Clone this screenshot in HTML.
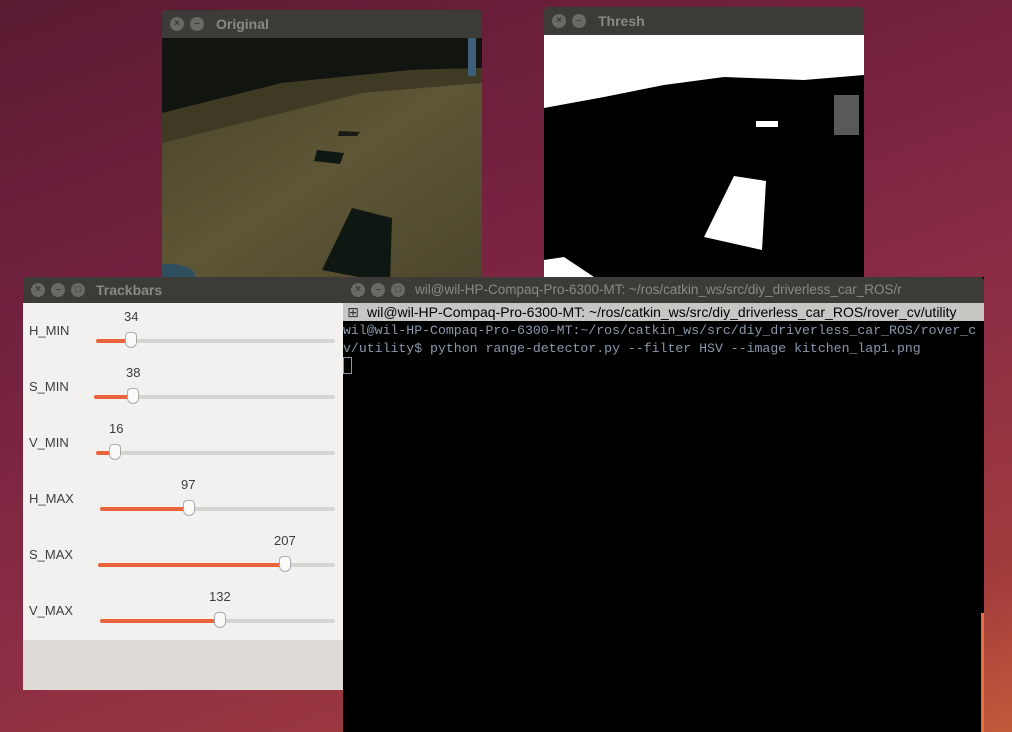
<!DOCTYPE html>
<html><head><meta charset="utf-8"><style>
*{margin:0;padding:0;box-sizing:border-box}
body{width:1012px;height:732px;overflow:hidden;position:relative;font-family:"Liberation Sans","DejaVu Sans",sans-serif;
background:linear-gradient(160deg,#5a1b33 0%,#762240 35%,#8c2d45 60%,#a03b3c 85%,#c25a3a 100%);}
.win{position:absolute}
.tb{position:absolute;left:0;right:0;top:0;background:#3c3b37;border-radius:4px 4px 0 0;color:#8a8984;font-weight:bold;font-size:14px}
.btn{position:absolute;top:50%;margin-top:-7px;width:14px;height:14px;border-radius:50%;background:#6a6964;color:#3c3b37;font-size:10px;line-height:14px;text-align:center}
.lbl{position:absolute;left:6px;font-size:13px;color:#3c3c3c}
.val{position:absolute;font-size:13px;color:#3c3c3c}
.track{position:absolute;height:4px;background:#d6d4d0;border-radius:2px;right:8px}
.fill{position:absolute;left:0;top:0;height:4px;background:#e8643a;border-radius:2px}
.h{position:absolute;top:-7px;width:12px;height:16px;background:#fafafa;border:1px solid #aaa;border-radius:4px 4px 6px 6px}
.term{font-family:"Liberation Mono","DejaVu Sans Mono",monospace;font-size:13.2px;color:#8a98ab;line-height:18px;white-space:pre}
</style></head><body>

<!-- Original -->
<div class="win" style="left:162px;top:10px;width:320px;height:268px">
 <div class="tb" style="height:28px"><span class="btn" style="left:8px">×</span><span class="btn" style="left:28px">–</span><span style="position:absolute;left:54px;top:6px">Original</span></div>
 <svg style="position:absolute;left:0;top:28px" width="320" height="240">
  <defs><linearGradient id="fl" x1="0" y1="0" x2="1" y2="1"><stop offset="0" stop-color="#4a4328"/><stop offset="0.5" stop-color="#5e5636"/><stop offset="1" stop-color="#4c462c"/></linearGradient></defs>
  <rect width="320" height="240" fill="#11140f"/>
  <polygon points="0,75 120,45 250,32 320,30 320,240 0,240" fill="url(#fl)"/>
  <polygon points="0,75 120,45 250,32 320,30 320,45 200,55 0,105" fill="#3e3a24"/>
  <polygon points="190,170 230,180 228,245 160,232" fill="#0f1712"/>
  <polygon points="155,112 182,115 178,126 152,123" fill="#0f1712"/>
  <polygon points="177,93 198,94 195,98 176,98" fill="#181a14"/>
  <rect x="306" y="0" width="8" height="38" fill="#3d5f7c"/>
  <ellipse cx="8" cy="238" rx="25" ry="12" fill="#2f4e5e"/>
 </svg>
</div>

<!-- Thresh -->
<div class="win" style="left:544px;top:7px;width:320px;height:270px">
 <div class="tb" style="height:28px"><span class="btn" style="left:8px">×</span><span class="btn" style="left:28px">–</span><span style="position:absolute;left:54px;top:6px">Thresh</span></div>
 <svg style="position:absolute;left:0;top:28px" width="320" height="242">
  <rect width="320" height="242" fill="#000"/>
  <polygon points="0,0 320,0 320,40 260,45 180,42 120,50 60,62 0,73" fill="#fff"/>
  <rect x="290" y="60" width="25" height="40" fill="#fff" opacity="0.35"/>
  <polygon points="190,141 222,146 218,215 160,202" fill="#fff"/>
  <polygon points="0,225 20,222 50,242 0,242" fill="#fff"/>
  <rect x="212" y="86" width="22" height="6" fill="#fff"/>
 </svg>
</div>

<!-- Trackbars -->
<div class="win" style="left:23px;top:277px;width:320px;height:413px">
 <div class="tb" style="height:26px"><span class="btn" style="left:8px">×</span><span class="btn" style="left:28px">–</span><span class="btn" style="left:48px">□</span><span style="position:absolute;left:73px;top:5px">Trackbars</span></div>
 <div style="position:absolute;left:0;top:26px;width:320px;height:337px;background:#f2f1f0">
  <div class="val" style="left:101px;top:6px">34</div><div class="lbl" style="top:20px">H_MIN</div>
  <div class="track" style="left:73px;top:36px"><div class="fill" style="width:35px"></div><div class="h" style="left:29px"></div></div>
  <div class="val" style="left:103px;top:62px">38</div><div class="lbl" style="top:76px">S_MIN</div>
  <div class="track" style="left:71px;top:92px"><div class="fill" style="width:39px"></div><div class="h" style="left:33px"></div></div>
  <div class="val" style="left:86px;top:118px">16</div><div class="lbl" style="top:132px">V_MIN</div>
  <div class="track" style="left:73px;top:148px"><div class="fill" style="width:19px"></div><div class="h" style="left:13px"></div></div>
  <div class="val" style="left:158px;top:174px">97</div><div class="lbl" style="top:188px">H_MAX</div>
  <div class="track" style="left:77px;top:204px"><div class="fill" style="width:89px"></div><div class="h" style="left:83px"></div></div>
  <div class="val" style="left:251px;top:230px">207</div><div class="lbl" style="top:244px">S_MAX</div>
  <div class="track" style="left:75px;top:260px"><div class="fill" style="width:187px"></div><div class="h" style="left:181px"></div></div>
  <div class="val" style="left:186px;top:286px">132</div><div class="lbl" style="top:300px">V_MAX</div>
  <div class="track" style="left:77px;top:316px"><div class="fill" style="width:120px"></div><div class="h" style="left:114px"></div></div>
 </div>
 <div style="position:absolute;left:0;top:363px;width:320px;height:50px;background:#dfdcd8"></div>
</div>

<!-- Terminal -->
<div class="win" style="left:343px;top:277px;width:641px;height:455px;background:#000">
 <div class="tb" style="height:26px;border-radius:0 4px 0 0;white-space:nowrap;overflow:hidden"><span class="btn" style="left:8px">×</span><span class="btn" style="left:28px">–</span><span class="btn" style="left:48px">□</span><span style="position:absolute;left:72px;top:5px;font-size:13.5px;font-weight:normal">wil@wil-HP-Compaq-Pro-6300-MT: ~/ros/catkin_ws/src/diy_driverless_car_ROS/r</span></div>
 <div style="position:absolute;left:0;top:26px;width:641px;height:18px;background:#c8c6c2;white-space:nowrap;overflow:hidden;font-size:14px;color:#000;line-height:18px"><span style="display:inline-block;width:20px;text-align:center;color:#333">⊞</span><span style="padding-left:4px">wil@wil-HP-Compaq-Pro-6300-MT: ~/ros/catkin_ws/src/diy_driverless_car_ROS/rover_cv/utility</span></div>
 <div class="term" style="position:absolute;left:0;top:45px;width:641px;overflow:hidden">wil@wil-HP-Compaq-Pro-6300-MT:~/ros/catkin_ws/src/diy_driverless_car_ROS/rover_c
v/utility$ python range-detector.py --filter HSV --image kitchen_lap1.png</div>
 <div style="position:absolute;left:0;top:80px;width:9px;height:17px;border:1px solid #8a98ab"></div>
 <div style="position:absolute;left:638px;top:336px;width:3px;height:119px;background:#e8703e"></div>
</div>
</body></html>
